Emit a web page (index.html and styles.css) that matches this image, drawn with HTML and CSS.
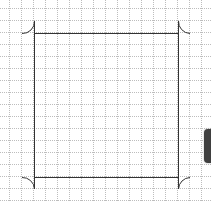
FILE: index.html
```html
<!DOCTYPE html>
<html>
<head>
<meta charset="utf-8">
<link rel="stylesheet" href="styles.css">
</head>
<body>
<div class="canvas">
  <svg class="diagram" width="211" height="202" viewBox="0 0 211 202" xmlns="http://www.w3.org/2000/svg">
    <defs>
      <pattern id="grid" width="12" height="12" patternUnits="userSpaceOnUse">
        <line x1="9.5" y1="0" x2="9.5" y2="12" class="grid-line"/>
        <line x1="0" y1="8.5" x2="12" y2="8.5" class="grid-line"/>
      </pattern>
    </defs>
    <rect width="211" height="202" fill="url(#grid)"/>
    <g class="shape">
      <line x1="34.5" y1="21" x2="34.5" y2="189"/>
      <line x1="178.5" y1="21" x2="178.5" y2="189"/>
      <line x1="34" y1="33.5" x2="179" y2="33.5"/>
      <line x1="34" y1="177.5" x2="179" y2="177.5"/>
      <path d="M22,33.5 A12,12 0 0 0 34.5,21"/>
      <path d="M178.5,21 A12,12 0 0 0 190,33.5"/>
      <path d="M22,177.5 A12,12 0 0 1 34.5,189"/>
      <path d="M178.5,189 A12,12 0 0 1 190,177.5"/>
    </g>
  </svg>
  <div class="panel-tab"></div>
</div>
</body>
</html>
```
FILE: styles.css
```css
html, body {
  margin: 0;
  padding: 0;
  background: #ffffff;
  overflow: hidden;
}
.canvas {
  position: relative;
  width: 211px;
  height: 202px;
  background: #ffffff;
}
.diagram {
  display: block;
}
.grid-line {
  stroke: #bdbdbd;
  stroke-width: 1;
  stroke-dasharray: 1 1;
}
.shape line,
.shape path {
  stroke: #333333;
  stroke-width: 1;
  fill: none;
}
.panel-tab {
  position: absolute;
  left: 204px;
  top: 129px;
  width: 10px;
  height: 34px;
  background: #3f3f3f;
  border-radius: 4px 0 0 4px;
  box-shadow: 0 0 2px rgba(0, 0, 0, 0.35);
}
```
